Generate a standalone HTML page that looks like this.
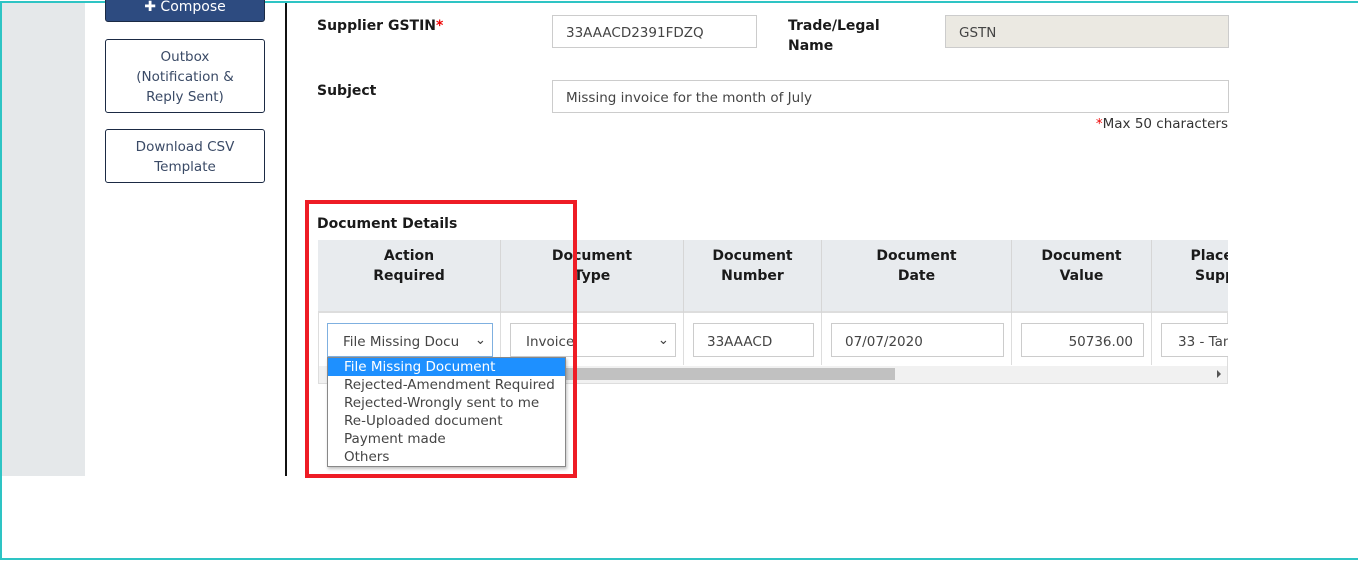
<!DOCTYPE html>
<html><head><meta charset="utf-8"><style>
*{box-sizing:border-box;margin:0;padding:0}
body{width:1358px;height:563px;position:relative;background:#fff;font-family:"DejaVu Sans","Liberation Sans",sans-serif;font-size:13.5px;color:#333;overflow:hidden}
.a{position:absolute}
.btn{position:absolute;left:105px;width:160px;border:1px solid #1b2a44;border-radius:3px;text-align:center;color:#3a4a66;font-size:13.5px;line-height:20px}
.lbl{position:absolute;font-weight:bold;color:#1a1a1a;font-size:14px;line-height:20px}
.inp{position:absolute;border:1px solid #ccc;background:#fff;padding-left:13px;color:#444;font-size:13.5px;padding-top:2px}
.th{position:absolute;top:240px;height:73px;border-right:1px solid #d6d6d6;text-align:center;font-weight:bold;color:#1a1a1a;font-size:14px;line-height:20px;padding-top:6px;overflow:hidden;white-space:nowrap}
.td{position:absolute;top:313px;height:52px;border-right:1px solid #ddd;overflow:hidden}
.dd div{height:18px;line-height:18px;padding-left:16px;font-size:13.5px;color:#444;white-space:nowrap}
</style></head><body>
<div class="a" style="left:0;top:1px;width:1358px;height:559px;border:2px solid #2ec4c4;border-width:2px 0 2px 2px"></div>
<div class="a" style="left:2px;top:3px;width:83px;height:473px;background:#e5e8ea"></div>
<div class="a" style="left:285px;top:3px;width:2px;height:473px;background:#111"></div>
<div class="a" style="left:105px;top:-4px;width:160px;height:26px;background:#2d4b80;border:1px solid #1b2a44;border-radius:3px;color:#fff;text-align:center;font-size:14px;line-height:20px">✚ Compose</div>
<div class="btn" style="top:39px;height:74px;padding-top:7px">Outbox<br>(Notification &amp;<br>Reply Sent)</div>
<div class="btn" style="top:129px;height:54px;padding-top:7px">Download CSV<br>Template</div>

<div class="lbl" style="left:317px;top:16px">Supplier GSTIN<span style="color:#e00">*</span></div>
<div class="inp" style="left:552px;top:15px;width:205px;height:33px;line-height:31px">33AAACD2391FDZQ</div>
<div class="lbl" style="left:788px;top:16px">Trade/Legal<br>Name</div>
<div class="inp" style="left:945px;top:15px;width:284px;height:33px;line-height:31px;background:#ebe9e2">GSTN</div>
<div class="lbl" style="left:317px;top:81px">Subject</div>
<div class="inp" style="left:552px;top:80px;width:677px;height:33px;line-height:31px">Missing invoice for the month of July</div>
<div class="a" style="right:130px;top:116px;font-size:13.5px;color:#333"><span style="color:#e00">*</span>Max 50 characters</div>

<div class="lbl" style="left:317px;top:214px">Document Details</div>
<div class="a" style="left:318px;top:240px;width:910px;height:144px;border:1px solid #ddd;background:#fff"></div>
<div class="a" style="left:318px;top:240px;width:910px;height:73px;background:#e8ebee;border-bottom:2px solid #ddd"></div>
<div class="th" style="left:318px;width:183px">Action<br>Required</div>
<div class="th" style="left:501px;width:183px">Document<br>Type</div>
<div class="th" style="left:684px;width:138px">Document<br>Number</div>
<div class="th" style="left:822px;width:190px">Document<br>Date</div>
<div class="th" style="left:1012px;width:140px">Document<br>Value</div>
<div class="a" style="left:1152px;top:240px;width:76px;height:73px;overflow:hidden"><div class="th" style="left:0;top:0;width:140px;border-right:none">Place of<br>Supply</div></div>
<div class="td" style="left:318px;width:183px"></div>
<div class="td" style="left:501px;width:183px"></div>
<div class="td" style="left:684px;width:138px"></div>
<div class="td" style="left:822px;width:190px"></div>
<div class="td" style="left:1012px;width:140px"></div>
<div class="inp" style="left:327px;top:323px;width:166px;height:34px;line-height:32px;border-color:#7fb0e0;padding-left:15px">File Missing Docu<span class="a" style="right:6px;top:0">⌄</span></div>
<div class="inp" style="left:510px;top:323px;width:166px;height:34px;line-height:32px;padding-left:15px">Invoice<span class="a" style="right:6px;top:0">⌄</span></div>
<div class="inp" style="left:693px;top:323px;width:121px;height:34px;line-height:32px">33AAACD</div>
<div class="inp" style="left:831px;top:323px;width:173px;height:34px;line-height:32px">07/07/2020</div>
<div class="inp" style="left:1021px;top:323px;width:123px;height:34px;line-height:32px;text-align:right;padding-right:10px">50736.00</div>
<div class="inp" style="left:1161px;top:323px;width:67px;height:34px;line-height:32px;border-right:none;white-space:nowrap;overflow:hidden;padding-left:16px">33 - Tamil</div>
<div class="a" style="left:319px;top:366px;width:908px;height:17px;background:#f1f1f1"></div>
<div class="a" style="left:530px;top:368px;width:365px;height:12px;background:#c1c1c1"></div>
<div class="a" style="left:1217px;top:370px;width:0;height:0;border-left:4px solid #555;border-top:4px solid transparent;border-bottom:4px solid transparent"></div>

<div class="a dd" style="left:327px;top:357px;width:239px;height:110px;background:#fff;border:1px solid #888;box-shadow:1px 2px 3px rgba(0,0,0,.25)">
<div style="background:#1e90ff;color:#fff">File Missing Document</div>
<div>Rejected-Amendment Required</div>
<div>Rejected-Wrongly sent to me</div>
<div>Re-Uploaded document</div>
<div>Payment made</div>
<div>Others</div>
</div>
<div class="a" style="left:305px;top:200px;width:272px;height:278px;border:4px solid #ee1c25"></div>
</body></html>
